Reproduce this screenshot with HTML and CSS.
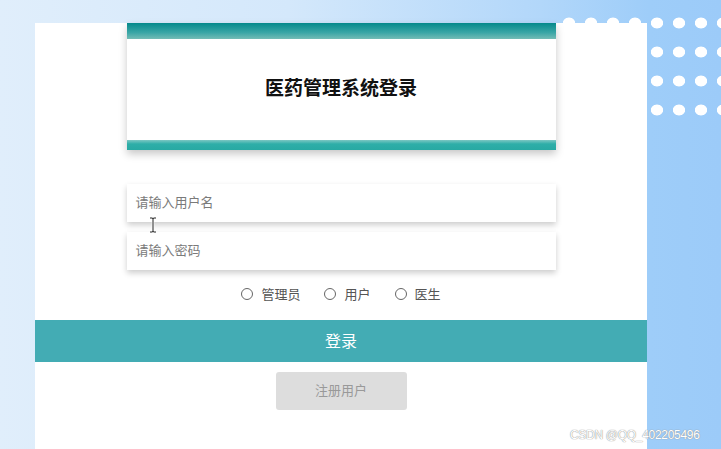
FILE: index.html
```html
<!DOCTYPE html>
<html lang="zh">
<head>
<meta charset="utf-8">
<title>医药管理系统登录</title>
<link rel="stylesheet" href="styles.css">
</head>
<body>
<div class="dots"></div>
<div class="page">
  <div class="card">
    <div class="header">
      <div class="band-top"></div>
      <div class="title">医药管理系统登录</div>
      <div class="band-bottom"></div>
    </div>
    <div class="form">
      <div class="input">请输入用户名</div>
      <div class="input">请输入密码</div>
    </div>
    <div class="roles">
      <label class="role"><span class="radio"></span>管理员</label>
      <label class="role"><span class="radio"></span>用户</label>
      <label class="role"><span class="radio"></span>医生</label>
    </div>
    <div class="login">登录</div>
    <div class="register">注册用户</div>
  </div>
</div>
<svg class="cursor" width="8" height="16" viewBox="0 0 8 16"><path d="M1 1h2.5l0.5 1 0.5-1H7M4 2v12M1 15h2.5l0.5-1 0.5 1H7" fill="none" stroke="#fff" stroke-width="2.5"/><path d="M1 1h2.5l0.5 1 0.5-1H7M4 2v12M1 15h2.5l0.5-1 0.5 1H7" fill="none" stroke="#222" stroke-width="1"/></svg>
<div class="watermark">CSDN @QQ_402205496</div>
</body>
</html>
```
FILE: styles.css
```css
html, body {
  margin: 0;
  padding: 0;
  height: 100%;
  overflow: hidden;
}
body {
  position: relative;
  font-family: "Noto Sans CJK SC", "Noto Sans", sans-serif;
  background: linear-gradient(90deg, #e0eefb 0%, #d4e8fb 40%, #b2d7fa 75%, #9ecdf9 90%, #9ccbf9 100%);
}
.dots {
  position: absolute;
  left: 558px;
  top: -20px;
  width: 170px;
  height: 142px;
  background-image: radial-gradient(ellipse 6.5px 5.8px at 11px 14px, #ffffff 88%, rgba(255,255,255,0) 100%);
  background-size: 22px 29px;
}
.page {
  position: relative;
  padding: 23px 0 0 35px;
}
.card {
  width: 612px;
  height: 440px;
  background: #fff;
  display: flex;
  flex-direction: column;
  align-items: center;
}
.header {
  width: 429px;
  height: 127px;
  background: #fff;
  display: flex;
  flex-direction: column;
  box-shadow: 0 4px 8px rgba(0,0,0,0.22);
}
.band-top {
  height: 16px;
  background: linear-gradient(180deg, #04898b 0%, #3aa6a6 60%, #74bcb6 100%);
}
.title {
  flex: 1;
  display: flex;
  align-items: center;
  justify-content: center;
  padding-bottom: 7px;
  font-size: 19px;
  font-weight: bold;
  color: #111;
}
.band-bottom {
  height: 10px;
  background: linear-gradient(180deg, #7cc7c3 0%, #2eaea8 40%, #28a9a3 100%);
}
.form {
  margin-top: 34px;
  width: 429px;
  display: flex;
  flex-direction: column;
  gap: 10px;
}
.input {
  height: 38px;
  box-sizing: border-box;
  padding-left: 9px;
  padding-bottom: 4px;
  display: flex;
  align-items: center;
  font-size: 13px;
  color: #7a7a7a;
  background: #fff;
  box-shadow: 0 3px 6px rgba(0,0,0,0.2);
}
.roles {
  height: 50px;
  box-sizing: border-box;
  padding-bottom: 4px;
  display: flex;
  align-items: center;
  gap: 24px;
  font-size: 13px;
  color: #555;
}
.role {
  display: flex;
  align-items: center;
  gap: 8px;
}
.radio {
  width: 12px;
  height: 12px;
  border: 1px solid #666;
  border-radius: 50%;
  box-sizing: border-box;
  margin-top: 2px;
}
.login {
  align-self: stretch;
  height: 42px;
  box-sizing: border-box;
  padding-bottom: 2px;
  background: #43acb4;
  color: #fff;
  font-size: 16px;
  display: flex;
  align-items: center;
  justify-content: center;
}
.register {
  margin-top: 10px;
  width: 131px;
  height: 38px;
  box-sizing: border-box;
  padding-bottom: 4px;
  border-radius: 3px;
  background: #dddddd;
  color: #999;
  font-size: 13px;
  display: flex;
  align-items: center;
  justify-content: center;
}
.cursor {
  position: absolute;
  left: 149px;
  top: 217px;
}
.watermark {
  position: absolute;
  left: 570px;
  top: 428px;
  font-family: "Liberation Sans", sans-serif;
  font-size: 12px;
  color: #fff;
  text-shadow: 0 0 1px #888, 0 0 1px #aaa;
  letter-spacing: -0.3px;
}
```
